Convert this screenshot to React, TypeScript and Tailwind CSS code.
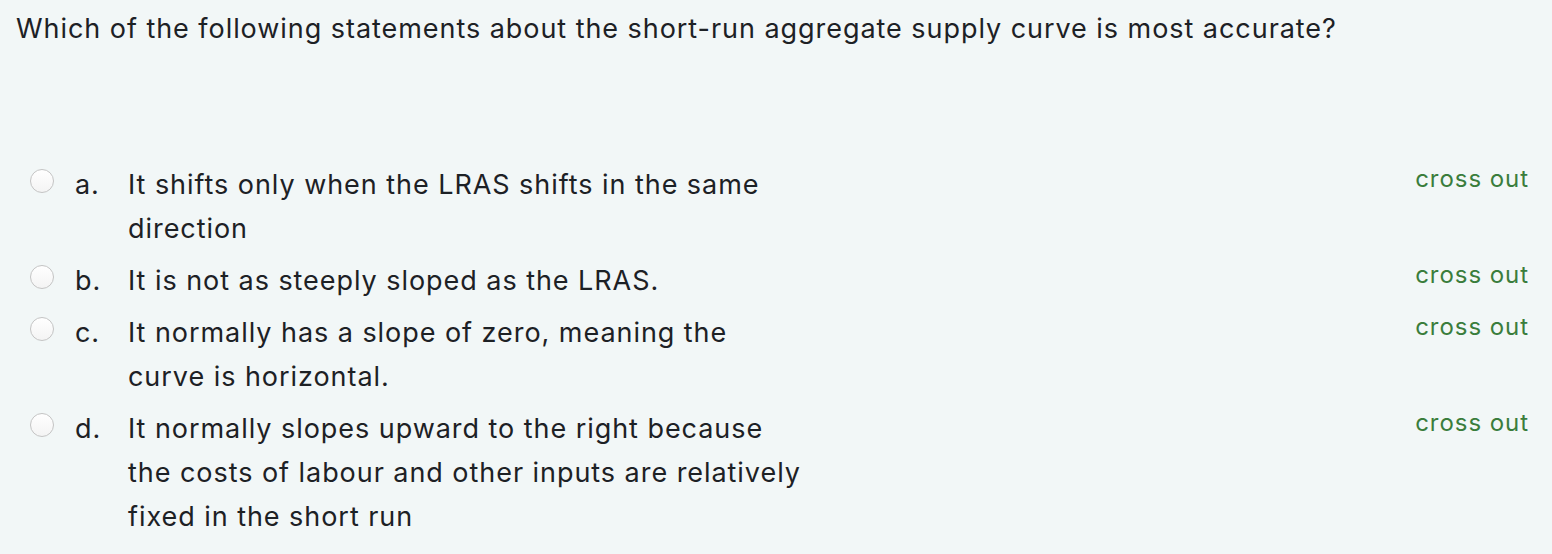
import React from "react";

const options = [
  { letter: "a.", text: "It shifts only when the LRAS shifts in the same direction" },
  { letter: "b.", text: "It is not as steeply sloped as the LRAS." },
  { letter: "c.", text: "It normally has a slope of zero, meaning the curve is horizontal." },
  {
    letter: "d.",
    text: "It normally slopes upward to the right because the costs of labour and other inputs are relatively fixed in the short run",
  },
];

export default function App() {
  return (
    <div
      className="w-[1552px] h-[554px] bg-[#f2f7f7] text-[#1d2125] overflow-hidden tracking-[0.95px]"
      style={{ fontFamily: "Inter, 'Noto Sans', sans-serif" }}
    >
      <div className="pt-[13px] pl-[16px] text-[27px] leading-[32px]">
        Which of the following statements about the short-run aggregate supply curve is most accurate?
      </div>
      <div className="mt-[118px] flex flex-col gap-[8px] pl-[30px] pr-[23px]">
        {options.map((o) => (
          <div key={o.letter} className="flex items-start">
            <div className="mt-[6px] w-[24px] h-[24px] rounded-full border border-[#c4c4c4] bg-gradient-to-b from-white to-[#f4f4f4] shrink-0" />
            <div className="ml-[21px] w-[53px] text-[27px] leading-[44px]">{o.letter}</div>
            <div className="w-[680px] text-[27px] leading-[44px]">{o.text}</div>
            <div className="ml-auto text-[24px] leading-[32px] text-[#3a7d3c]">cross out</div>
          </div>
        ))}
      </div>
    </div>
  );
}
